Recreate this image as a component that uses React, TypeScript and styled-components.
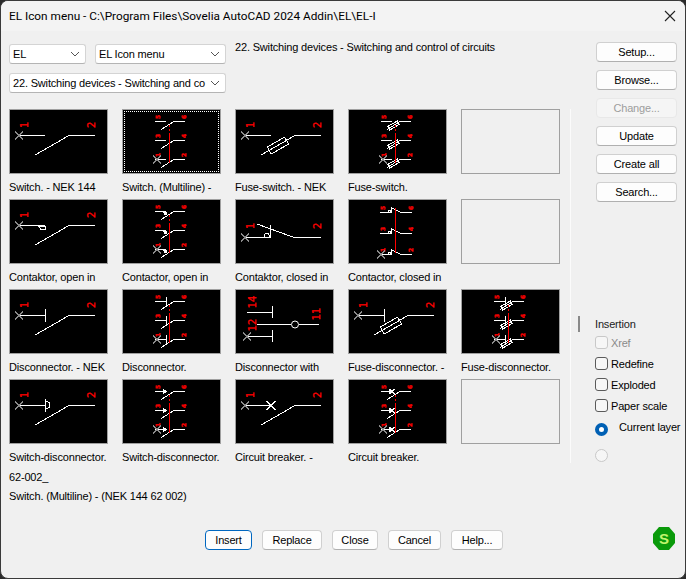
import React from "react";
import styled, { createGlobalStyle } from "styled-components";

const Global = createGlobalStyle`
  html, body { margin: 0; padding: 0; background: #2b2b2b; }
  * { box-sizing: border-box; }
`;

const Window = styled.div`
  width: 686px;
  height: 579px;
  display: flex;
  flex-direction: column;
  background: #f0f0f0;
  border: 1px solid #3a3a3a;
  border-radius: 8px;
  overflow: hidden;
  font-family: "Liberation Sans", Arial, sans-serif;
  font-size: 11px;
  letter-spacing: -0.17px;
  color: #000;
`;
const TitleBar = styled.div`
  height: 30px;
  flex: none;
  display: flex;
  align-items: center;
  justify-content: space-between;
  padding: 0 9px 0 8px;
  background: #f3f3f3;
  font-family: "Roboto", "Liberation Sans", sans-serif;
  font-size: 11.8px;
  letter-spacing: 0;
`;
const Upper = styled.div`
  display: flex;
  padding-left: 8px;
`;
const LeftPane = styled.div`
  width: 561px;
  flex: none;
`;
const Controls = styled.div`
  display: flex;
  gap: 9px;
  padding-top: 13px;
  height: 78px;
`;
const SelectStack = styled.div`
  width: 217px;
  display: grid;
  grid-template-columns: 77px 131px;
  grid-template-rows: 20px 20px;
  gap: 9px;
`;
const Select = styled.div<{ $wide?: boolean }>`
  grid-column: ${(p) => (p.$wide ? "1 / span 2" : "auto")};
  display: flex;
  align-items: center;
  justify-content: space-between;
  padding: 0 5px 0 3px;
  background: #fff;
  border: 1px solid #d4d4d4;
  border-bottom-color: #b4b4b4;
  border-radius: 3px;
  white-space: nowrap;
`;
const SelectText = styled.span`
  white-space: nowrap;
`;
const Caption = styled.div`
  line-height: 16px;
  margin-top: -5px;
`;
const IconGrid = styled.div`
  display: grid;
  grid-template-columns: repeat(5, 99px);
  grid-auto-rows: 90px;
  column-gap: 14px;
`;
const Item = styled.div`
  min-width: 0;
`;
const Thumb = styled.div<{ $empty?: boolean }>`
  position: relative;
  height: 65px;
  border: 1px solid #a0a0a0;
  background: ${(p) => (p.$empty ? "#f0f0f0" : "#000")};
`;
const Selection = styled.div`
  position: absolute;
  inset: 1px;
  border: 1px dotted #fff;
`;
const ItemLabel = styled.div`
  margin-top: 5px;
  line-height: 16px;
  white-space: nowrap;
`;
const InfoLine = styled.div`
  line-height: 16px;
  height: 19px;
`;
const Info = styled.div`
  margin-top: 0;
`;
const Divider = styled.div`
  width: 1px;
  height: 354px;
  margin-top: 78px;
  background: #fbfbfb;
  flex: none;
`;
const RightPane = styled.div`
  flex: 1;
  padding: 11px 0 0 7px;
`;
const ButtonColumn = styled.div`
  display: flex;
  flex-direction: column;
  gap: 8px;
  margin-left: 18px;
  width: 81px;
`;
const Button = styled.button<{ $focus?: boolean; $w?: number }>`
  height: 20px;
  width: ${(p) => (p.$w ? `${p.$w}px` : "100%")};
  padding: 0;
  font: inherit;
  letter-spacing: inherit;
  color: #000;
  background: #fdfdfd;
  border: 1px solid ${(p) => (p.$focus ? "#0067c0" : "#d0d0d0")};
  border-bottom-color: ${(p) => (p.$focus ? "#0067c0" : "#b0b0b0")};
  border-radius: 4px;
  &:disabled {
    color: #9d9d9d;
    background: #f5f5f5;
    border-color: #e8e8e8;
  }
`;
const Insertion = styled.div`
  display: flex;
  margin-top: 114px;
`;
const GroupBar = styled.div`
  width: 2px;
  height: 16px;
  background: #8a8a8a;
  flex: none;
`;
const OptionList = styled.div`
  margin-left: 15px;
  margin-top: 1px;
`;
const GroupTitle = styled.div`
  line-height: 14px;
  height: 19px;
  color: #222;
`;
const CheckRow = styled.div<{ $disabled?: boolean }>`
  display: flex;
  align-items: center;
  gap: 3px;
  height: 13px;
  margin-bottom: 8px;
  color: ${(p) => (p.$disabled ? "#8a8a8a" : "#000")};
  white-space: nowrap;
`;
const CheckBox = styled.span<{ $disabled?: boolean }>`
  width: 13px;
  height: 13px;
  flex: none;
  border: 1px solid ${(p) => (p.$disabled ? "#c8c8c8" : "#5a5a5a")};
  border-radius: 3px;
  background: ${(p) => (p.$disabled ? "#f6f6f6" : "#f7f7f7")};
`;
const RadioRow = styled.div`
  display: flex;
  gap: 11px;
  height: 26px;
  padding-top: 3px;
  white-space: nowrap;
`;
const RadioDot = styled.span<{ $on?: boolean }>`
  width: 13px;
  height: 13px;
  flex: none;
  border-radius: 50%;
  background: ${(p) => (p.$on ? "#fff" : "#f6f6f6")};
  border: ${(p) => (p.$on ? "4.5px solid #0060b4" : "1px solid #c8c8c8")};
`;
const RadioText = styled.span`
  line-height: 14px;
  margin-top: -3px;
`;
const Footer = styled.div`
  flex: 1;
  display: flex;
  align-items: flex-start;
  gap: 10px;
  padding: 23px 0 0 204px;
  position: relative;
`;
const Badge = styled.svg`
  position: absolute;
  right: 9px;
  top: 19px;
`;

type Decor = "none" | "fuse" | "contactor" | "bar" | "barFuse" | "switchDisc" | "breaker";

const W = "#fff";
const R = "#f00";
const G = "#8a8a8a";

const Canvas: React.FC<{ children: React.ReactNode }> = ({ children }) => (
  <svg width="97" height="63" viewBox="1 1 97 63" shapeRendering="crispEdges" style={{ display: "block" }}>
    {children}
  </svg>
);

const Cross: React.FC<{ x: number; y: number; s?: number; c?: string }> = ({ x, y, s = 4, c = G }) => (
  <path d={`M${x - s} ${y - s}L${x + s} ${y + s}M${x - s} ${y + s}L${x + s} ${y - s}`} stroke={c} fill="none" />
);

const Num: React.FC<{ x: number; y: number; t: string; size?: number; bold?: boolean }> = ({ x, y, t, size = 10, bold }) => (
  <text
    x={x}
    y={y}
    fill={R}
    stroke={R}
    strokeWidth={0.3}
    fontSize={size}
    fontWeight={bold ? 700 : 400}
    fontFamily="DejaVu Sans, sans-serif"
    textAnchor="middle"
    dominantBaseline="central"
    transform={`rotate(-90 ${x} ${y})`}
  >
    {t}
  </text>
);

const Fuse: React.FC<{ cx: number; cy: number; w: number; h: number }> = ({ cx, cy, w, h }) => (
  <rect x={cx - w / 2} y={cy - h / 2} width={w} height={h} transform={`rotate(-30 ${cx} ${cy})`} stroke={W} fill="none" />
);

const Single: React.FC<{ decor: Decor }> = ({ decor }) => {
  const line = "M10 26.5H36";
  return (
    <Canvas>
      <Num x={15} y={16} t="1" />
      <Num x={82} y={16} t="2" />
      <path d={line} stroke={W} fill="none" />
      <Cross x={10} y={26.5} />
      <path d="M26 46L60 26.5H86" stroke={W} fill="none" />
      {decor === "fuse" && <Fuse cx={43} cy={36.5} w={20} h={8} />}
      {decor === "barFuse" && <Fuse cx={43} cy={36.5} w={20} h={8} />}
      {(decor === "bar" || decor === "barFuse" || decor === "switchDisc") && <path d="M36.5 20V33" stroke={W} />}
      {decor === "contactor" && <path d="M30 27.5h6v3h-4z" stroke={W} fill="none" />}
      {decor === "switchDisc" && <path d="M37 22.5c5 0 5 7 0 7" stroke={W} fill="none" />}
      {decor === "breaker" && <Cross x={36} y={26.5} s={4.5} c={W} />}
    </Canvas>
  );
};

const poleRows = [12, 31, 50];
const poleNums = [
  ["5", "6"],
  ["3", "4"],
  ["1", "2"],
];

const Multi: React.FC<{ decor: Decor }> = ({ decor }) => (
  <Canvas>
    {poleRows.map((y, i) => (
      <g key={y}>
        <Num x={35} y={y - 4} t={poleNums[i][0]} size={6} bold />
        <Num x={61} y={y - 4} t={poleNums[i][1]} size={6} bold />
        <path d={`M33 ${y + 0.5}H44M52 ${y + 0.5}H63M39 ${y + 8.5}L52 ${y + 0.5}`} stroke={W} fill="none" />
        {(decor === "fuse" || decor === "barFuse") && <Fuse cx={45.5} cy={y + 4.5} w={11} h={4} />}
        {(decor === "bar" || decor === "barFuse") && <path d={`M44.5 ${y - 4}V${y + 5}`} stroke={W} />}
        {decor === "contactor" && <path d={`M42 ${y + 1.5}h2.5v1.5h-2z`} stroke={W} fill={W} />}
        {decor === "switchDisc" && <path d={`M41 ${y - 2.5}L45 ${y + 0.5}L41 ${y + 3.5}z`} fill={W} />}
        {decor === "breaker" && (
          <>
            <path d={`M41 ${y - 2.5}L45 ${y + 0.5}L41 ${y + 3.5}z`} fill={W} />
            <Cross x={44} y={y + 0.5} s={2.5} c={W} />
          </>
        )}
      </g>
    ))}
    <path d="M47.5 16V24" stroke={R} strokeDasharray="2 2" />
    <path d="M47.5 24V54" stroke={R} />
    <Cross x={35} y={50.5} />
  </Canvas>
);

const MultiClosed: React.FC = () => (
  <Canvas>
    {[13, 34, 55].map((y, i) => (
      <g key={y}>
        <Num x={34} y={y - 4} t={poleNums[i][0]} size={6} bold />
        <Num x={62} y={y - 4} t={poleNums[i][1]} size={6} bold />
        <path d={`M32 ${y + 0.5}H43M53 ${y + 0.5}H64M43 ${y - 4.5}L53 ${y + 0.5}M43.5 ${y - 5}V${y}`} stroke={W} fill="none" />
        <path d={`M40 ${y - 2}c2 0 3 1 3 2h-3z`} stroke={W} fill="none" />
      </g>
    ))}
    <path d="M47.5 9V54" stroke={R} />
    <Cross x={33} y={55.5} />
  </Canvas>
);

const SingleClosed: React.FC = () => (
  <Canvas>
    <Num x={15} y={27} t="1" />
    <Num x={82} y={27} t="2" />
    <path d="M10 38.5H35.5V26M22 25L59 38.5H86" stroke={W} fill="none" />
    <path d="M29 38c0-3 2-4 4-4l2 4" stroke={W} fill="none" />
    <Cross x={10} y={38.5} />
  </Canvas>
);

const DiscWith: React.FC = () => (
  <Canvas>
    <Num x={17} y={13} t="14" />
    <Num x={81} y={25} t="11" />
    <Num x={17} y={36} t="12" />
    <path d="M12 23.5H37M37.5 17V29M22 35.5H56M64 35.5H84M12 47.5H37M37.5 41V53" stroke={W} fill="none" />
    <circle cx={60} cy={35.5} r={3.5} stroke={W} fill="none" shapeRendering="auto" />
    <Cross x={12} y={47.5} />
  </Canvas>
);

type Cell = { label?: string; art?: React.ReactNode; selected?: boolean };

const cells: Cell[] = [
  { label: "Switch. - NEK 144", art: <Single decor="none" /> },
  { label: "Switch. (Multiline) -", art: <Multi decor="none" />, selected: true },
  { label: "Fuse-switch. - NEK", art: <Single decor="fuse" /> },
  { label: "Fuse-switch.", art: <Multi decor="fuse" /> },
  {},
  { label: "Contaktor, open in", art: <Single decor="contactor" /> },
  { label: "Contactor, open in", art: <Multi decor="contactor" /> },
  { label: "Contaktor, closed in", art: <SingleClosed /> },
  { label: "Contactor, closed in", art: <MultiClosed /> },
  {},
  { label: "Disconnector. - NEK", art: <Single decor="bar" /> },
  { label: "Disconnector.", art: <Multi decor="bar" /> },
  { label: "Disconnector with", art: <DiscWith /> },
  { label: "Fuse-disconnector. -", art: <Single decor="barFuse" /> },
  { label: "Fuse-disconnector.", art: <Multi decor="barFuse" /> },
  { label: "Switch-disconnector.", art: <Single decor="switchDisc" /> },
  { label: "Switch-disconnector.", art: <Multi decor="switchDisc" /> },
  { label: "Circuit breaker. -", art: <Single decor="breaker" /> },
  { label: "Circuit breaker.", art: <Multi decor="breaker" /> },
  {},
];

const Chevron: React.FC = () => (
  <svg width="10" height="6" viewBox="0 0 10 6" style={{ flex: "none" }}>
    <path d="M1 1l4 4 4-4" stroke="#555" fill="none" />
  </svg>
);

export default function App() {
  return (
    <Window>
      <Global />
      <TitleBar>
        <span>EL Icon menu - C:\Program Files\Sovelia AutoCAD 2024 Addin\EL\EL-I</span>
        <svg width="12" height="12" viewBox="0 0 12 12">
          <path d="M1 1l10 10M11 1L1 11" stroke="#222" strokeWidth="1.1" fill="none" />
        </svg>
      </TitleBar>
      <Upper>
        <LeftPane>
          <Controls>
            <SelectStack>
              <Select>
                <SelectText>EL</SelectText>
                <Chevron />
              </Select>
              <Select>
                <SelectText>EL Icon menu</SelectText>
                <Chevron />
              </Select>
              <Select $wide>
                <SelectText>22. Switching devices - Switching and co</SelectText>
                <Chevron />
              </Select>
            </SelectStack>
            <Caption>22. Switching devices - Switching and control of circuits</Caption>
          </Controls>
          <IconGrid>
            {cells.map((c, i) => (
              <Item key={i}>
                <Thumb $empty={!c.art}>
                  {c.art}
                  {c.selected && <Selection />}
                </Thumb>
                {c.label && <ItemLabel>{c.label}</ItemLabel>}
              </Item>
            ))}
          </IconGrid>
          <Info>
            <InfoLine>62-002_</InfoLine>
            <InfoLine>Switch. (Multiline) - (NEK 144 62 002)</InfoLine>
          </Info>
        </LeftPane>
        <Divider />
        <RightPane>
          <ButtonColumn>
            <Button>Setup...</Button>
            <Button>Browse...</Button>
            <Button disabled>Change...</Button>
            <Button>Update</Button>
            <Button>Create all</Button>
            <Button>Search...</Button>
          </ButtonColumn>
          <Insertion>
            <GroupBar />
            <OptionList>
              <GroupTitle>Insertion</GroupTitle>
              <CheckRow $disabled>
                <CheckBox $disabled />
                Xref
              </CheckRow>
              <CheckRow>
                <CheckBox />
                Redefine
              </CheckRow>
              <CheckRow>
                <CheckBox />
                Exploded
              </CheckRow>
              <CheckRow>
                <CheckBox />
                Paper scale
              </CheckRow>
              <RadioRow>
                <RadioDot $on />
                <RadioText>Current layer</RadioText>
              </RadioRow>
              <RadioRow>
                <RadioDot />
              </RadioRow>
            </OptionList>
          </Insertion>
        </RightPane>
      </Upper>
      <Footer>
        <Button $focus $w={47}>Insert</Button>
        <Button $w={60}>Replace</Button>
        <Button $w={46}>Close</Button>
        <Button $w={53}>Cancel</Button>
        <Button $w={52}>Help...</Button>
        <Badge width="24" height="25" viewBox="0 0 24 25">
          <path d="M7 1h10l6 7v9l-6 7H7l-6-7V8z" fill="#0a9a0a" />
          <text x="12" y="17.5" textAnchor="middle" fontSize="15" fontWeight="700" fontFamily="Liberation Sans, sans-serif" fill="#c0f56c">
            S
          </text>
        </Badge>
      </Footer>
    </Window>
  );
}
